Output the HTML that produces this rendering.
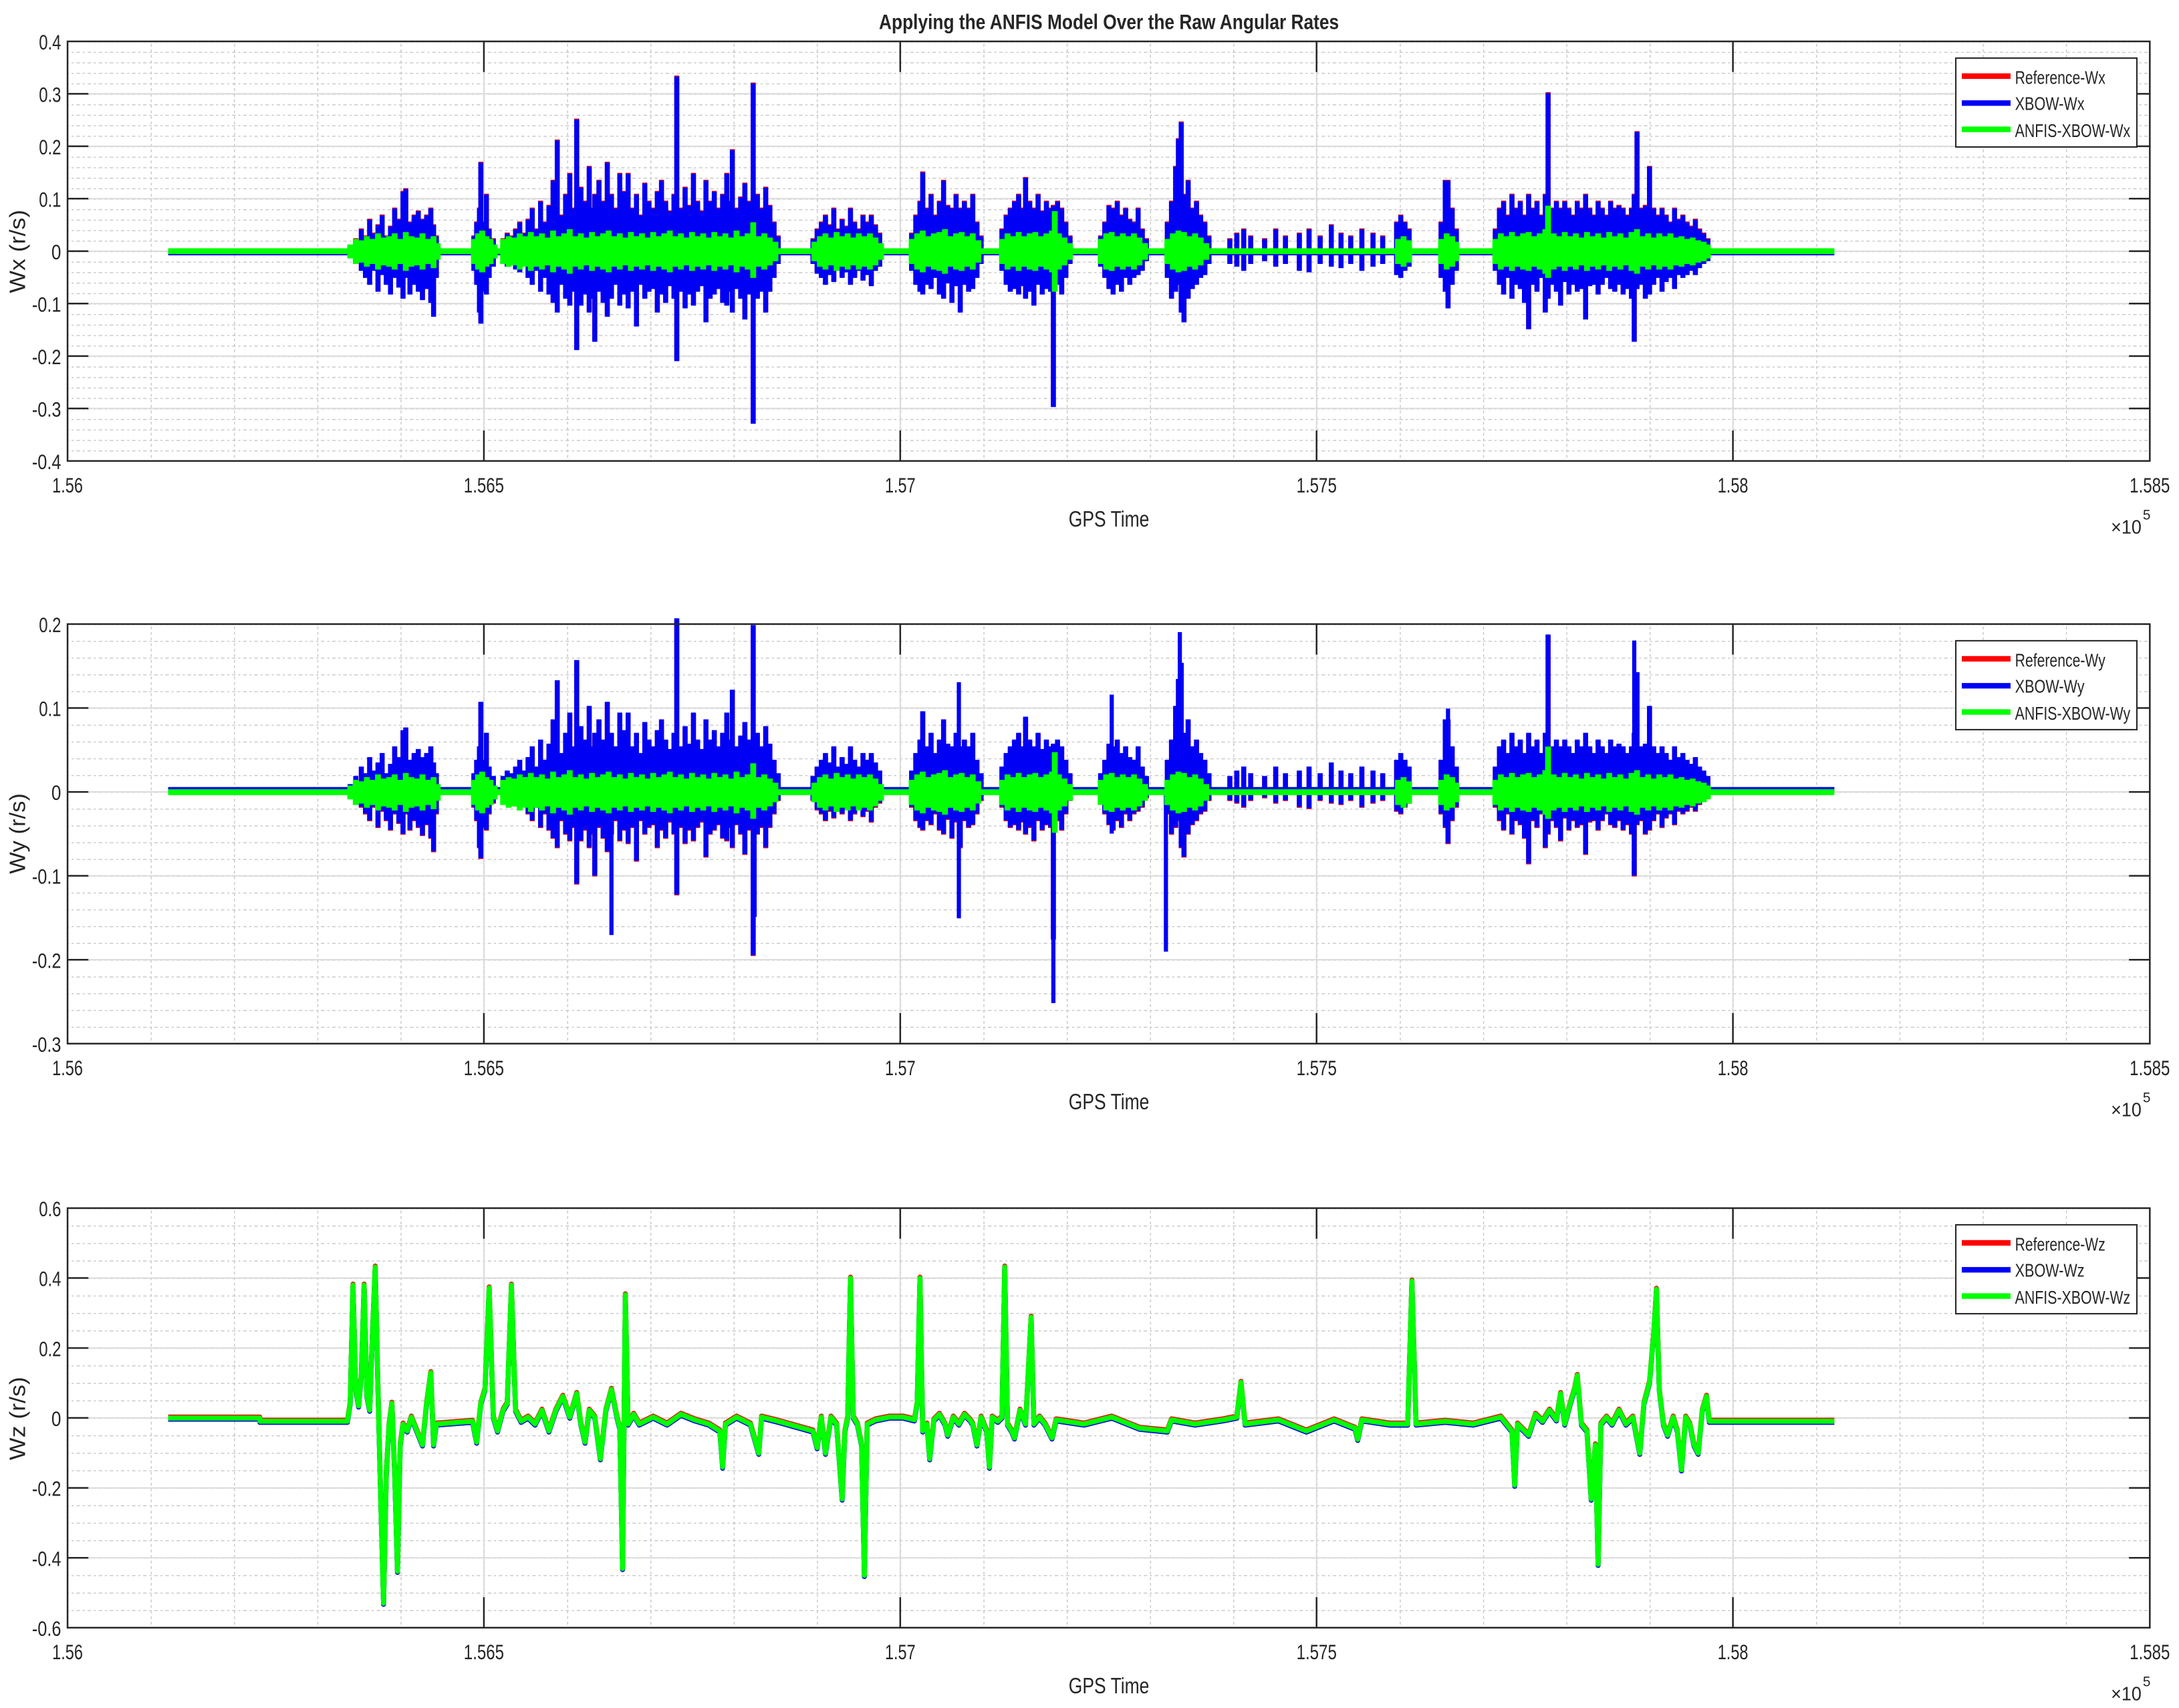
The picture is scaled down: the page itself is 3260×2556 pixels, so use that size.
<!DOCTYPE html>
<html><head><meta charset="utf-8"><style>
html,body{margin:0;padding:0;background:#fff;}
svg{display:block;}
text{font-family:"Liberation Sans",sans-serif;fill:#262626;}
</style></head><body>
<svg width="3260" height="2556" viewBox="0 0 1568 1229.4" xmlns="http://www.w3.org/2000/svg">
<defs>
<pattern id="vx" x="48.6" y="0" width="59.92" height="4" patternUnits="userSpaceOnUse"><line x1="0.3" y1="0" x2="0.3" y2="4" stroke="#c4c4c4" stroke-width="0.7" stroke-dasharray="1.5,2"/></pattern>
<pattern id="h1" x="0" y="29.8" width="8" height="7.55" patternUnits="userSpaceOnUse"><line x1="0" y1="0.3" x2="8" y2="0.3" stroke="#c4c4c4" stroke-width="0.7" stroke-dasharray="1.5,2"/></pattern>
<pattern id="h2" x="0" y="449.2" width="8" height="12.08" patternUnits="userSpaceOnUse"><line x1="0" y1="0.3" x2="8" y2="0.3" stroke="#c4c4c4" stroke-width="0.7" stroke-dasharray="1.5,2"/></pattern>
<pattern id="h3" x="0" y="869.6" width="8" height="12.58" patternUnits="userSpaceOnUse"><line x1="0" y1="0.3" x2="8" y2="0.3" stroke="#c4c4c4" stroke-width="0.7" stroke-dasharray="1.5,2"/></pattern>

<g id="xgrid">
<rect x="48.6" y="29.8" width="1498.4" height="302" fill="url(#vx)"/>
<path d="M348.2 29.8V331.8M647.8 29.8V331.8M947.4 29.8V331.8M1247 29.8V331.8" stroke="#dcdcdc" stroke-width="1"/>
</g>
<g id="frame">
<rect x="48.6" y="29.8" width="1498.4" height="302" fill="none" stroke="#262626" stroke-width="1.2"/>
<path d="M348.2 29.8v22M647.8 29.8v22M947.4 29.8v22M1247 29.8v22M348.2 331.8v-22M647.8 331.8v-22M947.4 331.8v-22M1247 331.8v-22" stroke="#262626" stroke-width="1.2"/>
<g font-size="15">
<text x="48.6" y="354.5" text-anchor="middle" textLength="22" lengthAdjust="spacingAndGlyphs">1.56</text>
<text x="348.2" y="354.5" text-anchor="middle" textLength="29" lengthAdjust="spacingAndGlyphs">1.565</text>
<text x="647.8" y="354.5" text-anchor="middle" textLength="22" lengthAdjust="spacingAndGlyphs">1.57</text>
<text x="947.4" y="354.5" text-anchor="middle" textLength="29" lengthAdjust="spacingAndGlyphs">1.575</text>
<text x="1247" y="354.5" text-anchor="middle" textLength="22" lengthAdjust="spacingAndGlyphs">1.58</text>
<text x="1547" y="354.5" text-anchor="middle" textLength="29" lengthAdjust="spacingAndGlyphs">1.585</text>
<text x="798" y="379" font-size="16" text-anchor="middle" textLength="58" lengthAdjust="spacingAndGlyphs">GPS Time</text>
<text x="1519" y="384" font-size="14" textLength="22" lengthAdjust="spacingAndGlyphs">×10</text>
<text x="1542" y="374" font-size="10">5</text>
</g>
</g>
<path id="bx" fill="none" stroke-width="3.6" d="M252 178V184 M256 172V190 M260 165V195 M263 170V200 M266 158V205 M269 168V195 M272 162V210 M275 155V198 M278 170V205 M281 163V212 M284 150V200 M287 158V207 M290 138V215 M292 136V200 M295 160V212 M298 155V205 M301 152V210 M304 158V216 M307 155V208 M310 150V218 M312 162V228 M314 170V200
M341 170V195 M343 160V205 M345 150V225 M346 117V233 M348 160V210 M350 140V212 M352 165V200 M355 172V192
M362 172V190 M365 168V192 M368 170V188 M371 165V194 M374 160V196 M377 168V190 M380 158V200 M383 150V205 M386 165V195 M389 145V210 M392 160V200 M395 148V212 M398 130V218 M401 101V225 M404 155V205 M407 140V215 M410 125V220 M413 150V210 M415 86V252 M418 135V220 M421 145V212 M424 120V225 M427 150V215 M428 140V246 M431 130V210 M434 145V218 M437 117V228 M440 140V215 M443 150V205 M446 125V220 M449 138V212 M452 125V222 M455 150V210 M458 140V235 M461 155V205 M464 132V215 M467 145V210 M470 150V208 M473 138V225 M476 130V212 M479 145V218 M482 152V206 M485 140V215 M487 55V260 M490 150V210 M493 135V222 M496 148V212 M499 125V220 M502 145V210 M505 152V206 M508 130V232 M511 145V215 M514 138V212 M517 150V208 M520 140V218 M523 125V220 M526 145V210 M527 108V225 M530 150V208 M533 142V215 M536 132V230 M539 145V212 M542 60V305 M545 140V215 M548 150V210 M551 135V225 M554 148V210 M557 160V200 M560 170V190
M585 172V190 M588 165V197 M591 160V200 M594 155V205 M597 162V198 M600 150V203 M603 165V195 M606 158V200 M609 163V196 M612 150V205 M615 160V200 M618 165V195 M621 155V202 M624 160V198 M627 155V206 M630 162V195 M633 168V192
M656 168V195 M659 155V205 M662 145V210 M664 124V212 M667 150V205 M670 140V208 M673 155V200 M676 145V212 M679 130V215 M682 148V204 M685 150V218 M688 140V206 M691 150V225 M694 145V205 M697 150V210 M700 140V208 M703 160V200 M706 170V190
M721 165V195 M724 155V205 M727 150V210 M730 145V208 M733 140V212 M736 150V206 M738 128V215 M741 145V210 M744 150V220 M747 140V205 M750 152V212 M753 145V208 M756 150V210 M758 148V293 M761 145V205 M764 150V212 M767 160V200 M770 170V190
M792 170V192 M795 160V200 M798 148V208 M801 150V212 M804 145V205 M807 155V210 M810 150V200 M813 158V205 M816 160V200 M819 150V198 M822 165V195 M825 172V188
M840 160V200 M843 145V215 M846 120V210 M848 100V205 M850 88V225 M852 140V232 M855 130V215 M858 150V208 M861 145V205 M864 155V200 M867 160V198 M870 170V190
M885 172V190 M890 168V192 M895 165V195 M900 170V190 M910 172V188 M918 165V192 M925 170V190 M935 168V195 M942 165V196 M950 170V190 M958 162V192 M965 168V193 M972 170V190 M980 165V195 M988 168V192 M995 170V190
M1005 160V198 M1008 155V200 M1011 160V195 M1014 165V192 M1037 160V200 M1040 130V210 M1042 130V222 M1045 150V205 M1048 165V195
M1076 165V195 M1079 150V205 M1082 145V212 M1085 155V200 M1088 140V215 M1091 150V205 M1094 145V208 M1097 155V218 M1100 140V237 M1103 150V205 M1106 145V210 M1109 155V200 M1112 140V225 M1114 67V215 M1117 150V205 M1120 145V210 M1123 150V220 M1126 145V203 M1129 150V212 M1132 155V205 M1135 145V210 M1138 150V208 M1141 140V230 M1144 150V206 M1147 155V205 M1150 145V212 M1153 150V205 M1156 155V200 M1159 145V208 M1162 150V210 M1165 148V205 M1168 150V212 M1171 155V208 M1174 150V215 M1176 140V246 M1178 95V208 M1181 150V205 M1184 148V215 M1187 120V212 M1190 150V205 M1193 155V200 M1196 150V210 M1199 155V203 M1202 160V200 M1205 150V208 M1208 158V198 M1211 155V200 M1214 160V198 M1217 163V195 M1220 158V198 M1223 165V193 M1226 168V190 M1229 172V188
M121 182H1320"/>
<path id="gx" fill="none" stroke-width="4.2" d="M121 180.8H1320
M252 176V186 M256 172V190 M260 173V189 M264 170V192 M268 172V190 M272 168V194 M276 171V191 M280 170V192 M284 168V194 M288 172V190 M292 167V195 M296 170V192 M300 171V191 M304 168V194 M308 172V190 M312 170V193 M315 175V187
M341 172V190 M344 168V194 M347 166V196 M350 170V192 M353 172V190 M356 176V186
M362 172V190 M366 170V192 M370 171V191 M374 168V194 M378 170V192 M382 167V195 M386 170V192 M390 168V194 M394 171V191 M398 166V196 M402 170V192 M406 168V194 M410 165V197 M414 170V192 M418 168V194 M422 171V191 M426 167V195 M430 170V192 M434 168V194 M438 166V196 M442 170V192 M446 168V194 M450 171V191 M454 167V195 M458 170V192 M462 168V194 M466 171V191 M470 167V195 M474 170V192 M478 168V194 M482 166V196 M486 170V192 M490 168V194 M494 171V191 M498 167V195 M502 170V192 M506 168V194 M510 171V191 M514 167V195 M518 170V192 M522 168V194 M526 171V191 M530 166V196 M534 170V192 M538 168V194 M542 160V200 M546 170V192 M550 168V194 M554 171V191 M558 174V188
M586 174V188 M590 170V192 M594 168V194 M598 171V191 M602 167V195 M606 170V192 M610 168V194 M614 171V191 M618 168V194 M622 170V192 M626 168V194 M630 171V191 M634 175V187
M656 172V190 M660 168V194 M664 166V196 M668 170V192 M672 168V194 M676 167V195 M680 165V197 M684 170V192 M688 168V194 M692 167V195 M696 170V192 M700 168V194 M704 173V189
M721 172V190 M725 168V194 M729 170V192 M733 167V195 M737 170V192 M741 168V194 M745 167V195 M749 170V192 M753 168V194 M757 166V196 M759 152V210 M762 168V194 M766 171V191 M770 175V187
M792 172V190 M796 168V194 M800 167V195 M804 170V192 M808 168V194 M812 170V192 M816 168V194 M820 171V191 M824 175V187
M840 172V190 M844 168V194 M848 166V196 M852 167V195 M856 170V192 M860 168V194 M864 171V191 M868 175V187
M1006 172V190 M1010 170V192 M1014 173V189 M1037 172V190 M1041 168V194 M1045 170V192 M1048 174V188
M1076 172V190 M1080 168V194 M1084 170V192 M1088 167V195 M1092 170V192 M1096 168V194 M1100 167V195 M1104 170V192 M1108 168V194 M1112 165V197 M1114 148V200 M1118 168V194 M1122 170V192 M1126 167V195 M1130 170V192 M1134 168V194 M1138 171V191 M1142 167V195 M1146 170V192 M1150 168V194 M1154 171V191 M1158 167V195 M1162 170V192 M1166 168V194 M1170 171V191 M1174 167V195 M1178 165V197 M1182 170V192 M1186 168V194 M1190 171V191 M1194 168V194 M1198 170V192 M1202 168V194 M1206 171V191 M1210 170V192 M1214 172V190 M1218 171V191 M1222 173V189 M1226 174V188 M1229 176V186"/>
<polyline id="wz" fill="none" stroke-width="3.6" stroke-linejoin="round" points="121,1020.7 187,1020.7 187,1023 250,1023 252,1010 254,925 256,1000 258,1012 260,990 262,925 264,1005 266,1015 268,960 270,912 272,1000 274,1080 276,1154 278,1060 280,1025 282,1010 284,1060 286,1131 288,1040 290,1025 293,1030 296,1020 300,1030 304,1040 307,1010 310,988 312,1040 314,1025 340,1023 343,1038 346,1010 349,1000 352,927 355,1020 358,1030 362,1015 365,1010 368,925 371,1015 375,1023 380,1020 385,1025 390,1015 395,1030 400,1015 405,1005 410,1020 415,1003 418,1025 421,1038 424,1015 428,1020 432,1050 436,1015 440,1000 444,1020 446,1028 448,1129 450,932 452,1025 456,1018 460,1025 470,1020 480,1025 490,1018 500,1022 510,1025 518,1030 520,1056 522,1025 530,1020 540,1025 546,1046 548,1020 560,1023 585,1030 588,1042 591,1020 594,1046 598,1020 602,1025 606,1079 608,1030 610,1020 612,920 614,1020 617,1025 620,1040 622,1134 624,1025 630,1022 640,1020 650,1020 658,1022 660,1010 662,920 664,1030 667,1025 669,1050 672,1022 676,1018 680,1025 682,1033 686,1020 690,1025 694,1018 698,1022 700,1025 703,1040 706,1020 710,1030 712,1056 714,1020 718,1023 721,1020 723,912 725,1025 728,1030 730,1035 734,1015 738,1025 742,948 744,1025 748,1020 752,1025 757,1035 760,1022 780,1025 800,1020 820,1028 840,1030 843,1022 860,1025 880,1022 890,1020 893,995 896,1025 920,1022 940,1030 960,1022 975,1028 977,1036 980,1022 1000,1025 1013,1025 1016,922 1019,1025 1040,1023 1060,1025 1080,1020 1088,1030 1090,1069 1092,1025 1100,1033 1105,1018 1110,1023 1115,1015 1120,1022 1123,1003 1126,1025 1130,1010 1133,1000 1135,990 1138,1025 1142,1030 1145,1079 1148,1040 1150,1126 1152,1025 1156,1020 1160,1025 1165,1015 1170,1025 1175,1020 1180,1046 1183,1010 1187,995 1190,960 1192,928 1194,1000 1197,1025 1200,1033 1204,1020 1207,1030 1210,1058 1213,1020 1216,1025 1219,1040 1222,1046 1225,1015 1228,1005 1230,1023 1320,1023"/>
</defs>

<rect width="1568" height="1229.4" fill="#fff"/>
<text x="798" y="21" font-size="15" font-weight="bold" text-anchor="middle" textLength="331" lengthAdjust="spacingAndGlyphs">Applying the ANFIS Model Over the Raw Angular Rates</text>

<!-- AXIS 1 -->
<rect x="48.6" y="29.8" width="1498.4" height="302" fill="url(#h1)"/>
<use href="#xgrid"/>
<path d="M48.6 67.5H1547M48.6 105.3H1547M48.6 143H1547M48.6 180.8H1547M48.6 218.5H1547M48.6 256.3H1547M48.6 294H1547" stroke="#dcdcdc" stroke-width="1"/>
<use href="#bx" stroke="#f00" transform="translate(0,-0.6)"/>
<use href="#bx" stroke="#0000f5"/>
<use href="#gx" stroke="#00ff00"/>
<use href="#frame"/>
<path d="M48.6 67.5h15M48.6 105.3h15M48.6 143h15M48.6 180.8h15M48.6 218.5h15M48.6 256.3h15M48.6 294h15M1547 67.5h-15M1547 105.3h-15M1547 143h-15M1547 180.8h-15M1547 218.5h-15M1547 256.3h-15M1547 294h-15" stroke="#262626" stroke-width="1.2"/>
<g font-size="15" text-anchor="end">
<text x="44" y="35.6" textLength="16" lengthAdjust="spacingAndGlyphs">0.4</text>
<text x="44" y="73.3" textLength="16" lengthAdjust="spacingAndGlyphs">0.3</text>
<text x="44" y="111.1" textLength="16" lengthAdjust="spacingAndGlyphs">0.2</text>
<text x="44" y="148.8" textLength="16" lengthAdjust="spacingAndGlyphs">0.1</text>
<text x="44" y="186.6" textLength="7" lengthAdjust="spacingAndGlyphs">0</text>
<text x="44" y="224.3" textLength="21" lengthAdjust="spacingAndGlyphs">-0.1</text>
<text x="44" y="262.1" textLength="21" lengthAdjust="spacingAndGlyphs">-0.2</text>
<text x="44" y="299.8" textLength="21" lengthAdjust="spacingAndGlyphs">-0.3</text>
<text x="44" y="337.6" textLength="21" lengthAdjust="spacingAndGlyphs">-0.4</text>
</g>
<text transform="translate(18,181) rotate(-90)" font-size="16" text-anchor="middle" textLength="60" lengthAdjust="spacingAndGlyphs">Wx (r/s)</text>
<g>
<rect x="1407.4" y="41.8" width="130.3" height="64" fill="#fff" stroke="#262626" stroke-width="1"/>
<path d="M1411.7 54.8H1446.8" stroke="#f00" stroke-width="4"/>
<path d="M1411.7 74.2H1446.8" stroke="#0000f5" stroke-width="4"/>
<path d="M1411.7 93.1H1446.8" stroke="#00ff00" stroke-width="4"/>
<g font-size="13.5">
<text x="1450" y="60.4" textLength="65" lengthAdjust="spacingAndGlyphs">Reference-Wx</text>
<text x="1450" y="79.2" textLength="50" lengthAdjust="spacingAndGlyphs">XBOW-Wx</text>
<text x="1450" y="98.6" textLength="83" lengthAdjust="spacingAndGlyphs">ANFIS-XBOW-Wx</text>
</g>
</g>

<!-- AXIS 2 -->
<rect x="48.6" y="449.2" width="1498.4" height="302" fill="url(#h2)"/>
<use href="#xgrid" transform="translate(0,419.4)"/>
<path d="M48.6 509.6H1547M48.6 570H1547M48.6 630.4H1547M48.6 690.8H1547" stroke="#dcdcdc" stroke-width="1"/>
<g transform="translate(0,394.6) scale(1,0.97)">
<use href="#bx" stroke="#f00" transform="translate(0,-2.4)"/>
<use href="#bx" stroke="#0000f5" transform="translate(0,-3)"/>
</g>
<path d="M758 567V722 M849 567V455 M839 567V685 M1176 567V461 M690 567V491 M690 567V661 M440 567V673 M543 567V660 M755 567V550 M800 500V600 M1042 510V600" stroke="#0000f5" stroke-width="3"/>
<use href="#gx" stroke="#00ff00" transform="translate(0,389.4)"/>
<use href="#frame" transform="translate(0,419.4)"/>
<path d="M48.6 509.6h15M48.6 570h15M48.6 630.4h15M48.6 690.8h15M1547 509.6h-15M1547 570h-15M1547 630.4h-15M1547 690.8h-15" stroke="#262626" stroke-width="1.2"/>
<g font-size="15" text-anchor="end">
<text x="44" y="455" textLength="16" lengthAdjust="spacingAndGlyphs">0.2</text>
<text x="44" y="515.4" textLength="16" lengthAdjust="spacingAndGlyphs">0.1</text>
<text x="44" y="575.8" textLength="7" lengthAdjust="spacingAndGlyphs">0</text>
<text x="44" y="636.2" textLength="21" lengthAdjust="spacingAndGlyphs">-0.1</text>
<text x="44" y="696.6" textLength="21" lengthAdjust="spacingAndGlyphs">-0.2</text>
<text x="44" y="757" textLength="21" lengthAdjust="spacingAndGlyphs">-0.3</text>
</g>
<text transform="translate(18,600) rotate(-90)" font-size="16" text-anchor="middle" textLength="58" lengthAdjust="spacingAndGlyphs">Wy (r/s)</text>
<g transform="translate(0,419.4)">
<rect x="1407.4" y="41.8" width="130.3" height="64" fill="#fff" stroke="#262626" stroke-width="1"/>
<path d="M1411.7 54.8H1446.8" stroke="#f00" stroke-width="4"/>
<path d="M1411.7 74.2H1446.8" stroke="#0000f5" stroke-width="4"/>
<path d="M1411.7 93.1H1446.8" stroke="#00ff00" stroke-width="4"/>
<g font-size="13.5">
<text x="1450" y="60.4" textLength="65" lengthAdjust="spacingAndGlyphs">Reference-Wy</text>
<text x="1450" y="79.2" textLength="50" lengthAdjust="spacingAndGlyphs">XBOW-Wy</text>
<text x="1450" y="98.6" textLength="83" lengthAdjust="spacingAndGlyphs">ANFIS-XBOW-Wy</text>
</g>
</g>

<!-- AXIS 3 -->
<rect x="48.6" y="869.6" width="1498.4" height="302" fill="url(#h3)"/>
<use href="#xgrid" transform="translate(0,839.8)"/>
<path d="M48.6 919.9H1547M48.6 970.3H1547M48.6 1020.6H1547M48.6 1071H1547M48.6 1121.3H1547" stroke="#dcdcdc" stroke-width="1"/>
<use href="#wz" stroke="#f00" transform="translate(0,-0.7)"/>
<use href="#wz" stroke="#0000f5" transform="translate(0,0.8)"/>
<use href="#wz" stroke="#00ff00"/>
<use href="#frame" transform="translate(0,839.8)"/>
<path d="M48.6 919.9h15M48.6 970.3h15M48.6 1020.6h15M48.6 1071h15M48.6 1121.3h15M1547 919.9h-15M1547 970.3h-15M1547 1020.6h-15M1547 1071h-15M1547 1121.3h-15" stroke="#262626" stroke-width="1.2"/>
<g font-size="15" text-anchor="end">
<text x="44" y="875.4" textLength="16" lengthAdjust="spacingAndGlyphs">0.6</text>
<text x="44" y="925.7" textLength="16" lengthAdjust="spacingAndGlyphs">0.4</text>
<text x="44" y="976.1" textLength="16" lengthAdjust="spacingAndGlyphs">0.2</text>
<text x="44" y="1026.4" textLength="7" lengthAdjust="spacingAndGlyphs">0</text>
<text x="44" y="1076.8" textLength="21" lengthAdjust="spacingAndGlyphs">-0.2</text>
<text x="44" y="1127.1" textLength="21" lengthAdjust="spacingAndGlyphs">-0.4</text>
<text x="44" y="1177.4" textLength="21" lengthAdjust="spacingAndGlyphs">-0.6</text>
</g>
<text transform="translate(18,1021) rotate(-90)" font-size="16" text-anchor="middle" textLength="60" lengthAdjust="spacingAndGlyphs">Wz (r/s)</text>
<g transform="translate(0,839.8)">
<rect x="1407.4" y="41.8" width="130.3" height="64" fill="#fff" stroke="#262626" stroke-width="1"/>
<path d="M1411.7 54.8H1446.8" stroke="#f00" stroke-width="4"/>
<path d="M1411.7 74.2H1446.8" stroke="#0000f5" stroke-width="4"/>
<path d="M1411.7 93.1H1446.8" stroke="#00ff00" stroke-width="4"/>
<g font-size="13.5">
<text x="1450" y="60.4" textLength="65" lengthAdjust="spacingAndGlyphs">Reference-Wz</text>
<text x="1450" y="79.2" textLength="50" lengthAdjust="spacingAndGlyphs">XBOW-Wz</text>
<text x="1450" y="98.6" textLength="83" lengthAdjust="spacingAndGlyphs">ANFIS-XBOW-Wz</text>
</g>
</g>
</svg>
</body></html>
